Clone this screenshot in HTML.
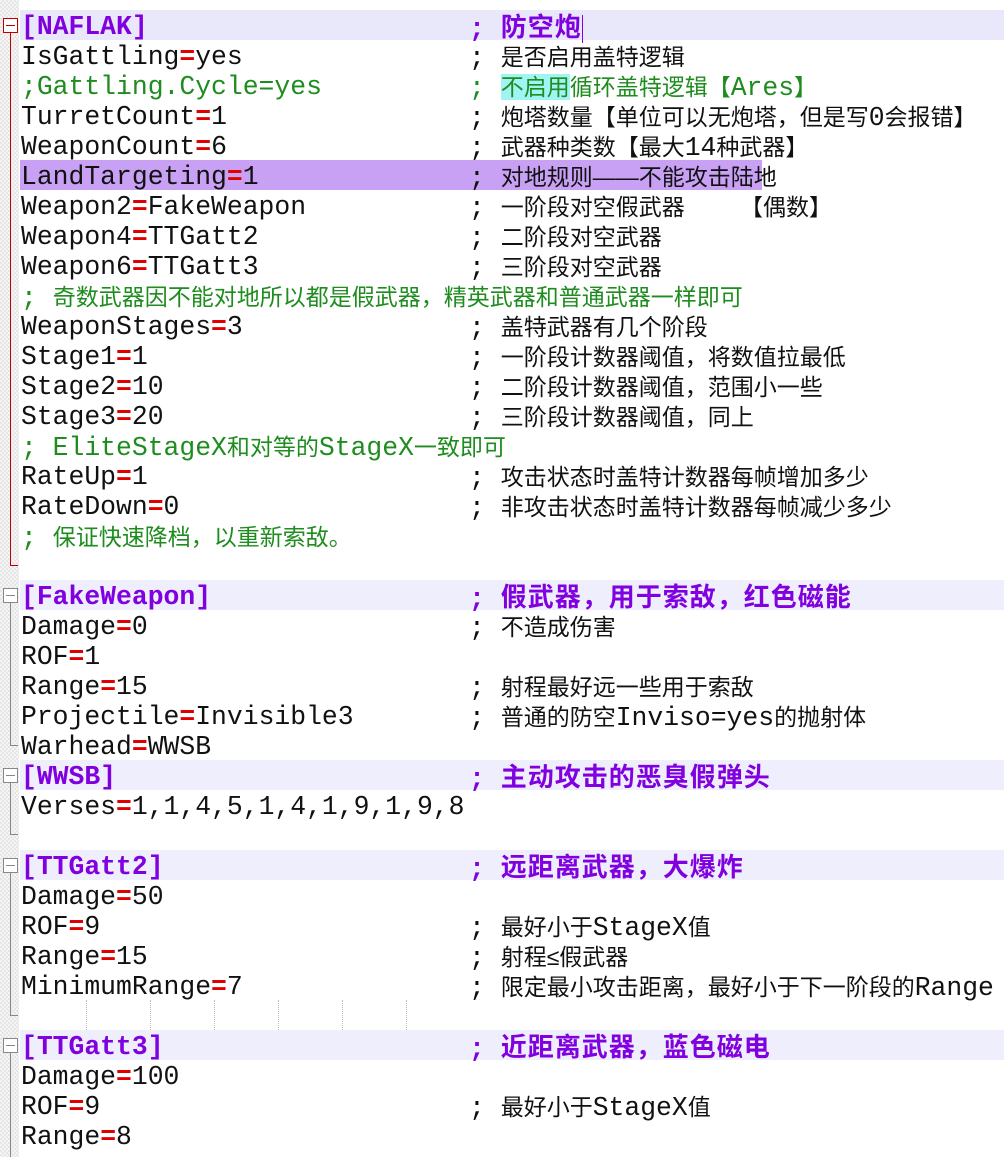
<!DOCTYPE html>
<html><head><meta charset="utf-8"><style>
html,body{margin:0;padding:0;background:#fff;width:1004px;height:1157px;overflow:hidden;position:relative}
.mg{position:absolute;left:0;top:0;width:19px;height:1157px;background-color:#f4f4f4;background-image:linear-gradient(45deg,#e6e6e6 25%,transparent 25%,transparent 75%,#e6e6e6 75%),linear-gradient(45deg,#e6e6e6 25%,transparent 25%,transparent 75%,#e6e6e6 75%);background-size:4px 4px;background-position:0 0,2px 2px}
.l{position:absolute;left:21px;height:30px;line-height:30px;margin-top:2px;white-space:pre;font-family:"Liberation Mono",monospace;font-size:26.4px;color:#111}
.c{position:absolute;left:448px;top:0;white-space:pre}
.z{font-family:"Liberation Sans","Noto Sans CJK SC",sans-serif;font-size:23px}
.m{font-family:"Liberation Mono",monospace;font-size:26.4px}
.e{color:#e00000;font-weight:bold}
.h{color:#8000e0;font-weight:bold}
.hz{font-family:"Liberation Sans","Noto Sans CJK SC",sans-serif;font-size:26px;font-weight:bold;color:#8000e0;letter-spacing:1px}
.g{color:#1e8c1e}
.bg{position:absolute;left:20px;right:0;height:30px;background:#eeeefc}
.fb{position:absolute;left:3px;width:13px;height:13px;border:1px solid #888;background:#fff}
.fb:after{content:"";position:absolute;left:2px;right:2px;top:6px;height:1px;background:#888}
.vl{position:absolute;left:10px;width:1px;background:#888}
.hl{position:absolute;left:10px;width:8px;height:1px;background:#888}
.gd{position:absolute;top:1000px;height:30px;border-left:1px dotted #bbb}
</style></head><body>
<div class="mg"></div>
<div class="bg" style="top:10px;background:#e8e8fa"></div>
<div class="bg" style="top:580px"></div>
<div class="bg" style="top:760px"></div>
<div class="bg" style="top:850px"></div>
<div class="bg" style="top:1030px"></div>
<div style="position:absolute;left:20px;top:160px;width:742px;height:30px;background:#c8a0f4"></div>

<div class="vl" style="top:32px;height:533px;background:#c00000"></div>
<div class="hl" style="top:565px;background:#c00000"></div>
<div class="fb" style="top:18px;border-color:#c00000"></div>
<div style="position:absolute;left:6px;top:25px;width:9px;height:1px;background:#c00000"></div>

<div class="vl" style="top:602px;height:144px"></div><div class="hl" style="top:745px"></div>
<div class="fb" style="top:588px"></div>
<div class="vl" style="top:782px;height:52px"></div><div class="hl" style="top:834px"></div>
<div class="fb" style="top:768px"></div>
<div class="vl" style="top:872px;height:144px"></div><div class="hl" style="top:1015px"></div>
<div class="fb" style="top:858px"></div>
<div class="vl" style="top:1052px;height:105px"></div>
<div class="fb" style="top:1038px"></div>

<div class="gd" style="left:86px"></div><div class="gd" style="left:150px"></div><div class="gd" style="left:214px"></div><div class="gd" style="left:278px"></div><div class="gd" style="left:342px"></div><div class="gd" style="left:406px"></div>

<div class="l" style="top:10px"><span class="h">[NAFLAK]</span><span class="c"><span class="h">; </span><span class="hz">防空炮</span><span style="display:inline-block;width:1px;height:28px;background:#8000e0;vertical-align:middle"></span></span></div>
<div class="l" style="top:40px">IsGattling<b class="e">=</b>yes<span class="c">; <span class="z">是否启用盖特逻辑</span></span></div>
<div class="l g" style="top:70px">;Gattling.Cycle=yes<span class="c">; <span class="z"><span style="background:#a0f4f4">不启用</span>循环盖特逻辑【<span class="m">Ares</span>】</span></span></div>
<div class="l" style="top:100px">TurretCount<b class="e">=</b>1<span class="c">; <span class="z">炮塔数量【单位可以无炮塔，但是写<span class="m">0</span>会报错】</span></span></div>
<div class="l" style="top:130px">WeaponCount<b class="e">=</b>6<span class="c">; <span class="z">武器种类数【最大<span class="m">14</span>种武器】</span></span></div>
<div class="l" style="top:160px">LandTargeting<b class="e">=</b>1<span class="c">; <span class="z">对地规则——不能攻击陆地</span></span></div>
<div class="l" style="top:190px">Weapon2<b class="e">=</b>FakeWeapon<span class="c">; <span class="z">一阶段对空假武器</span></span><span class="z" style="position:absolute;left:719px;top:0">【偶数】</span></div>
<div class="l" style="top:220px">Weapon4<b class="e">=</b>TTGatt2<span class="c">; <span class="z">二阶段对空武器</span></span></div>
<div class="l" style="top:250px">Weapon6<b class="e">=</b>TTGatt3<span class="c">; <span class="z">三阶段对空武器</span></span></div>
<div class="l g" style="top:280px">; <span class="z">奇数武器因不能对地所以都是假武器，精英武器和普通武器一样即可</span></div>
<div class="l" style="top:310px">WeaponStages<b class="e">=</b>3<span class="c">; <span class="z">盖特武器有几个阶段</span></span></div>
<div class="l" style="top:340px">Stage1<b class="e">=</b>1<span class="c">; <span class="z">一阶段计数器阈值，将数值拉最低</span></span></div>
<div class="l" style="top:370px">Stage2<b class="e">=</b>10<span class="c">; <span class="z">二阶段计数器阈值，范围小一些</span></span></div>
<div class="l" style="top:400px">Stage3<b class="e">=</b>20<span class="c">; <span class="z">三阶段计数器阈值，同上</span></span></div>
<div class="l g" style="top:430px">; EliteStageX<span class="z">和对等的</span>StageX<span class="z">一致即可</span></div>
<div class="l" style="top:460px">RateUp<b class="e">=</b>1<span class="c">; <span class="z">攻击状态时盖特计数器每帧增加多少</span></span></div>
<div class="l" style="top:490px">RateDown<b class="e">=</b>0<span class="c">; <span class="z">非攻击状态时盖特计数器每帧减少多少</span></span></div>
<div class="l g" style="top:520px">; <span class="z">保证快速降档，以重新索敌。</span></div>

<div class="l" style="top:580px"><span class="h">[FakeWeapon]</span><span class="c"><span class="h">; </span><span class="hz">假武器，用于索敌，红色磁能</span></span></div>
<div class="l" style="top:610px">Damage<b class="e">=</b>0<span class="c">; <span class="z">不造成伤害</span></span></div>
<div class="l" style="top:640px">ROF<b class="e">=</b>1</div>
<div class="l" style="top:670px">Range<b class="e">=</b>15<span class="c">; <span class="z">射程最好远一些用于索敌</span></span></div>
<div class="l" style="top:700px">Projectile<b class="e">=</b>Invisible3<span class="c">; <span class="z">普通的防空<span class="m">Inviso=yes</span>的抛射体</span></span></div>
<div class="l" style="top:730px">Warhead<b class="e">=</b>WWSB</div>
<div class="l" style="top:760px"><span class="h">[WWSB]</span><span class="c"><span class="h">; </span><span class="hz">主动攻击的恶臭假弹头</span></span></div>
<div class="l" style="top:790px">Verses<b class="e">=</b>1,1,4,5,1,4,1,9,1,9,8</div>

<div class="l" style="top:850px"><span class="h">[TTGatt2]</span><span class="c"><span class="h">; </span><span class="hz">远距离武器，大爆炸</span></span></div>
<div class="l" style="top:880px">Damage<b class="e">=</b>50</div>
<div class="l" style="top:910px">ROF<b class="e">=</b>9<span class="c">; <span class="z">最好小于<span class="m">StageX</span>值</span></span></div>
<div class="l" style="top:940px">Range<b class="e">=</b>15<span class="c">; <span class="z">射程≤假武器</span></span></div>
<div class="l" style="top:970px">MinimumRange<b class="e">=</b>7<span class="c">; <span class="z">限定最小攻击距离，最好小于下一阶段的<span class="m">Range</span></span></span></div>

<div class="l" style="top:1030px"><span class="h">[TTGatt3]</span><span class="c"><span class="h">; </span><span class="hz">近距离武器，蓝色磁电</span></span></div>
<div class="l" style="top:1060px">Damage<b class="e">=</b>100</div>
<div class="l" style="top:1090px">ROF<b class="e">=</b>9<span class="c">; <span class="z">最好小于<span class="m">StageX</span>值</span></span></div>
<div class="l" style="top:1120px">Range<b class="e">=</b>8</div>
</body></html>
